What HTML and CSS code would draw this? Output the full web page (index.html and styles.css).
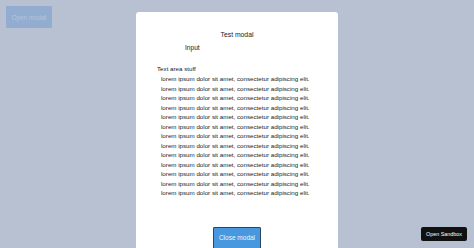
FILE: index.html
```html
<!DOCTYPE html>
<html>
<head>
<meta charset="utf-8">
<link rel="stylesheet" href="styles.css">
</head>
<body>
<div class="page">
  <button class="open-btn">Open modal</button>
</div>
<div class="modal">
  <div class="title">Test modal</div>
  <div class="input-label">Input</div>
  <div class="area-label">Text area stuff</div>
  <div class="lines">
    <div>lorem ipsum dolor sit amet, consectetur adipiscing elit.</div>
    <div>lorem ipsum dolor sit amet, consectetur adipiscing elit.</div>
    <div>lorem ipsum dolor sit amet, consectetur adipiscing elit.</div>
    <div>lorem ipsum dolor sit amet, consectetur adipiscing elit.</div>
    <div>lorem ipsum dolor sit amet, consectetur adipiscing elit.</div>
    <div>lorem ipsum dolor sit amet, consectetur adipiscing elit.</div>
    <div>lorem ipsum dolor sit amet, consectetur adipiscing elit.</div>
    <div>lorem ipsum dolor sit amet, consectetur adipiscing elit.</div>
    <div>lorem ipsum dolor sit amet, consectetur adipiscing elit.</div>
    <div>lorem ipsum dolor sit amet, consectetur adipiscing elit.</div>
    <div>lorem ipsum dolor sit amet, consectetur adipiscing elit.</div>
    <div>lorem ipsum dolor sit amet, consectetur adipiscing elit.</div>
    <div>lorem ipsum dolor sit amet, consectetur adipiscing elit.</div>
  </div>
  <div class="footer">
    <button class="close-btn">Close modal</button>
  </div>
</div>
<button class="sandbox">Open Sandbox</button>
</body>
</html>
```

FILE: styles.css
```css
html, body {
  margin: 0;
  padding: 0;
  width: 474px;
  height: 248px;
  overflow: hidden;
  background: #b8c1d1;
  font-family: "Liberation Sans", Arial, sans-serif;
  color: #222;
}
.page {
  padding: 6px;
}
.open-btn {
  display: block;
  width: 46px;
  height: 22px;
  margin: 0;
  padding: 0;
  border: none;
  background: #93add0;
  color: #b3c5de;
  font-family: "Liberation Sans", Arial, sans-serif;
  font-size: 6.3px;
}
.modal {
  position: absolute;
  left: 136px;
  top: 12px;
  width: 202px;
  height: 236px;
  overflow: hidden;
  background: #fff;
  border-radius: 3px 3px 0 0;
  display: flex;
  flex-direction: column;
}
.title {
  margin-top: 19px;
  text-align: center;
  font-size: 6.8px;
  line-height: 8px;
}
.input-label {
  margin-top: 5px;
  margin-left: 49px;
  font-size: 6.6px;
  line-height: 8px;
}
.area-label {
  margin-top: 13px;
  margin-left: 21px;
  font-size: 6.2px;
  line-height: 8px;
}
.lines {
  margin-top: 1px;
  margin-left: 25px;
  font-size: 6.2px;
  line-height: 9.5px;
}
.footer {
  display: flex;
  justify-content: center;
  margin-top: 29px;
  flex: none;
}
.close-btn {
  flex: none;
  width: 48px;
  height: 22px;
  margin: 0;
  padding: 0;
  border: 1px solid #2c4660;
  border-radius: 1px;
  background: #4898df;
  color: #eef5fc;
  font-family: "Liberation Sans", Arial, sans-serif;
  font-size: 6.5px;
}
.sandbox {
  position: absolute;
  left: 421px;
  top: 227px;
  width: 46px;
  height: 14px;
  margin: 0;
  padding: 0;
  border: none;
  border-radius: 2px;
  background: #111;
  color: #fff;
  font-family: "Liberation Sans", Arial, sans-serif;
  font-size: 5.4px;
}
```
